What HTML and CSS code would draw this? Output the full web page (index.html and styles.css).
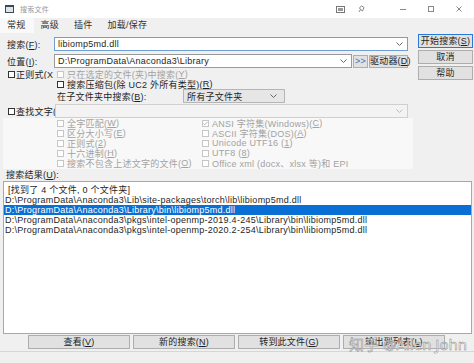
FILE: index.html
```html
<!DOCTYPE html>
<html lang="zh-CN">
<head>
  <meta charset="UTF-8">
  <title>搜索文件</title>
  <link rel="stylesheet" href="styles.css">
</head>
<body>
  <div class="window">
    <div class="titlebar">
      <span class="app-icon"></span>
      <span class="title">搜索文件</span>
      <div class="title-tools">
        <svg width="9" height="7" viewBox="0 0 9 7"><rect x="0.5" y="0.5" width="8" height="6" fill="none" stroke="#777"/><rect x="2" y="2" width="5" height="3" fill="#999"/></svg>
        <svg width="7" height="8" viewBox="0 0 7 8"><path d="M1 7 L2.5 4.5 M2.5 4.5 L4.5 6 L6 2.5 L3.5 0.8 L1.5 3 Z" fill="none" stroke="#777" stroke-width="0.9"/></svg>
      </div>
      <div class="caption-btns">
        <svg width="6" height="6" viewBox="0 0 6 6"><line x1="0" y1="3.5" x2="6" y2="3.5" stroke="#888"/></svg>
        <svg width="6" height="6" viewBox="0 0 6 6"><rect x="0.5" y="0.5" width="5" height="5" fill="none" stroke="#888"/></svg>
        <svg width="6" height="6" viewBox="0 0 6 6"><path d="M0.5 0.5 L5.5 5.5 M5.5 0.5 L0.5 5.5" stroke="#888"/></svg>
      </div>
    </div>

    <div class="tabs">
      <span class="tab active">常规</span>
      <span class="tab">高级</span>
      <span class="tab">插件</span>
      <span class="tab">加载/保存</span>
    </div>

    <div class="top">
      <div class="form">
        <div class="row row-search">
          <span class="lbl">搜索(<u>F</u>):</span>
          <div class="combo focus">
            <span class="val">libiomp5md.dll</span>
            <svg class="chev" width="7" height="4" viewBox="0 0 7 4"><polyline points="0.5,0.5 3.5,3.5 6.5,0.5" fill="none" stroke="#666"/></svg>
          </div>
        </div>
        <div class="row row-path">
          <span class="lbl">位置(<u>I</u>):</span>
          <div class="combo path">
            <span class="val">D:\ProgramData\Anaconda3\Library</span>
            <svg class="chev" width="7" height="4" viewBox="0 0 7 4"><polyline points="0.5,0.5 3.5,3.5 6.5,0.5" fill="none" stroke="#666"/></svg>
          </div>
          <button class="btn small">&gt;&gt;</button>
          <button class="btn drive">驱动器(<u>D</u>)</button>
        </div>
        <div class="row check-row">
          <span class="cb-item first"><span class="cb"></span>正则式(X</span>
          <span class="cb-item off"><span class="cb"></span>只在选定的文件(夹)中搜索(<u>Y</u>)</span>
        </div>
        <div class="row check-row indent">
          <span class="cb-item"><span class="cb"></span>搜索压缩包(除 UC2 外所有类型)(<u>R</u>)</span>
        </div>
        <div class="row sub-row indent">
          <span class="sub-lbl">在子文件夹中搜索(<u>B</u>):</span>
          <div class="select">
            <span>所有子文件夹</span>
            <svg class="chev" width="7" height="4" viewBox="0 0 7 4"><polyline points="0.5,0.5 3.5,3.5 6.5,0.5" fill="none" stroke="#666"/></svg>
          </div>
        </div>
        <div class="row text-row">
          <span class="cb-item first"><span class="cb"></span>查找文字(</span>
          <div class="combo disabled">
            <svg class="chev" width="7" height="4" viewBox="0 0 7 4"><polyline points="0.5,0.5 3.5,3.5 6.5,0.5" fill="none" stroke="#bbb"/></svg>
          </div>
        </div>
        <div class="options">
          <div class="opt-col left">
            <span class="cb-item off"><span class="cb"></span>全字匹配(<u>W</u>)</span>
            <span class="cb-item off"><span class="cb"></span>区分大小写(<u>E</u>)</span>
            <span class="cb-item off"><span class="cb"></span>正则式(<u>2</u>)</span>
            <span class="cb-item off"><span class="cb"></span>十六进制(<u>H</u>)</span>
            <span class="cb-item off"><span class="cb"></span>搜索不包含上述文字的文件(<u>O</u>)</span>
          </div>
          <div class="opt-col right">
            <span class="cb-item off"><span class="cb checked"><svg width="6" height="5" viewBox="0 0 6 5"><polyline points="0.5,2.5 2.2,4 5.5,0.5" fill="none" stroke="#aaa"/></svg></span>ANSI 字符集(Windows)(<u>C</u>)</span>
            <span class="cb-item off"><span class="cb"></span>ASCII 字符集(DOS)(<u>A</u>)</span>
            <span class="cb-item off"><span class="cb"></span>Unicode UTF16 (<u>1</u>)</span>
            <span class="cb-item off"><span class="cb"></span>UTF8 (<u>8</u>)</span>
            <span class="cb-item off"><span class="cb"></span>Office xml (docx、xlsx 等)和 EPI</span>
          </div>
        </div>
      </div>
      <div class="side">
        <button class="btn side-btn default">开始搜索(<u>S</u>)</button>
        <button class="btn side-btn">取消</button>
        <button class="btn side-btn">帮助</button>
      </div>
    </div>

    <div class="results-lbl">搜索结果(<u>U</u>):</div>
    <div class="results">
      <div class="item summary">[找到了 4 个文件, 0 个文件夹]</div>
      <div class="item">D:\ProgramData\Anaconda3\Lib\site-packages\torch\lib\libiomp5md.dll</div>
      <div class="item selected">D:\ProgramData\Anaconda3\Library\bin\libiomp5md.dll</div>
      <div class="item">D:\ProgramData\Anaconda3\pkgs\intel-openmp-2019.4-245\Library\bin\libiomp5md.dll</div>
      <div class="item">D:\ProgramData\Anaconda3\pkgs\intel-openmp-2020.2-254\Library\bin\libiomp5md.dll</div>
    </div>

    <div class="actions">
      <button class="btn act">查看(<u>V</u>)</button>
      <button class="btn act">新的搜索(<u>N</u>)</button>
      <button class="btn act">转到此文件(<u>G</u>)</button>
      <button class="btn act">输出到列表(<u>L</u>)</button>
    </div>
    <div class="statusbar"></div>

    <div class="watermark">知乎 @Allen John</div>
  </div>
</body>
</html>
```

FILE: styles.css
```css
/* Base */
body {
  margin: 0;
  font-family: "Liberation Sans", "Noto Sans CJK SC", sans-serif;
  font-size: 9px;
  letter-spacing: 0.25px;
  color: #1e1e1e;
}

u {
  text-decoration: underline;
  text-underline-offset: 1px;
}

.window {
  position: relative;
  width: 474px;
  height: 363px;
  background-color: #f0f0f0;
  overflow: hidden;
}

/* Title bar */
.titlebar {
  height: 18px;
  background-color: #ffffff;
  display: flex;
  align-items: center;
}

.app-icon {
  width: 7px;
  height: 5px;
  margin-left: 5px;
  border: 1px solid #3d4852;
  border-top-width: 2px;
  background-color: #dfe4ea;
}

.title {
  margin-left: 6px;
  font-size: 7px;
  color: #9a9a9a;
}

.title-tools {
  margin-left: auto;
  display: flex;
  align-items: center;
  gap: 13px;
}

.caption-btns {
  display: flex;
  align-items: center;
  gap: 22px;
  margin-left: 35px;
  margin-right: 12px;
}

/* Tabs */
.tabs {
  height: 15px;
  display: flex;
  background-color: #f0f0f0;
}

.tab {
  padding: 0 8px 0 7px;
  line-height: 15px;
  color: #333;
}

.tab.active {
  background-color: #f9f9f9;
}

/* Top form */
.top {
  display: flex;
}

.form {
  width: 413px;
}

.row {
  display: flex;
  align-items: center;
}

.lbl {
  width: 47px;
  padding-left: 7px;
}

.row-search {
  margin-top: 4px;
  height: 14px;
}

.row-path {
  margin-top: 3px;
  height: 14px;
}

.combo {
  box-sizing: border-box;
  height: 14px;
  border: 1px solid #9a9a9a;
  background-color: #ffffff;
  display: flex;
  align-items: center;
  padding: 0 4px 0 3px;
}

.combo .val {
  flex: 1;
  white-space: nowrap;
}

.combo.focus {
  width: 354px;
  border-color: #6f9fd3;
}

.combo.path {
  width: 298px;
}

.combo.disabled {
  width: 353px;
  border-color: #cfcfcf;
  background-color: #f3f3f3;
  justify-content: flex-end;
}

.chev {
  margin-left: auto;
}

.btn {
  box-sizing: border-box;
  font-family: inherit;
  font-size: 9px;
  letter-spacing: 0.2px;
  color: #1e1e1e;
  background-color: #e1e1e1;
  border: 1px solid #adadad;
  padding: 0;
  margin: 0;
  height: 13px;
  line-height: 11px;
  white-space: nowrap;
}

.btn.small {
  width: 15px;
  margin-left: 1px;
  color: #3b6fb6;
}

.btn.drive {
  width: 39px;
  margin-left: 1px;
}

.check-row {
  height: 10px;
}

.check-row:nth-child(3) {
  margin-top: 1px;
}

.indent {
  padding-left: 57px;
}

.cb-item {
  display: flex;
  align-items: center;
  white-space: nowrap;
  height: 10px;
}

.cb-item.first {
  width: 49px;
  padding-left: 8px;
  overflow: hidden;
}

.cb {
  box-sizing: border-box;
  width: 7px;
  height: 7px;
  border: 1px solid #333;
  background-color: #ffffff;
  margin-right: 3px;
  flex: none;
  display: flex;
  align-items: center;
  justify-content: center;
}

.cb-item.first .cb {
  margin-right: 1px;
}

.cb-item.off {
  color: #a2a2a2;
}

.cb-item.off .cb {
  border-color: #c6c6c6;
}

.sub-row {
  height: 14px;
}

.sub-lbl {
  width: 126px;
}

.select {
  box-sizing: border-box;
  width: 102px;
  height: 14px;
  border: 1px solid #b5b5b5;
  background-color: #e6e6e6;
  display: flex;
  align-items: center;
  padding: 0 7px 0 3px;
}

.text-row {
  margin-top: 1px;
  height: 14px;
}

.text-row .cb-item.first {
  width: 47px;
}

.options {
  margin-left: 3px;
  width: 410px;
  height: 51px;
  background-color: #f8f8f8;
  display: flex;
}

.opt-col {
  display: flex;
  flex-direction: column;
}

.opt-col .cb-item {
  height: 10px;
}

.opt-col.left {
  padding-left: 54px;
  width: 145px;
}

.side {
  width: 55px;
  margin-left: 5px;
  padding-top: 1px;
  display: flex;
  flex-direction: column;
  gap: 2px;
}

.side-btn {
  height: 14px;
}

.side-btn.default {
  border-color: #2a7ad5;
}

/* Results */
.results-lbl {
  height: 12px;
  line-height: 12px;
  padding-left: 6px;
}

.results {
  box-sizing: border-box;
  margin-left: 3px;
  width: 469px;
  height: 153px;
  border: 1px solid #a8a8a8;
  background-color: #ffffff;
  padding-top: 3px;
}

.item {
  height: 10px;
  line-height: 10px;
  padding-left: 1px;
  white-space: nowrap;
}

.item.summary {
  padding-left: 4px;
}

.item.selected {
  background-color: #0a6fd4;
  color: #ffffff;
}

.actions {
  display: flex;
  gap: 3px;
  padding-left: 28px;
  margin-top: 1px;
}

.btn.act {
  width: 102px;
  height: 14px;
}

.statusbar {
  margin-top: 2px;
  height: 10px;
  border-top: 1px solid #d6d6d6;
  background-color: #f0f0f0;
}

/* Watermark overlay */
.watermark {
  position: absolute;
  left: 349px;
  top: 336px;
  font-family: "Noto Sans", "Noto Sans CJK SC", sans-serif;
  font-size: 15px;
  line-height: 17px;
  letter-spacing: 0;
  color: rgba(255, 255, 255, 0.85);
  -webkit-text-stroke: 0.5px #8a8a8a;
  white-space: nowrap;
}
```
